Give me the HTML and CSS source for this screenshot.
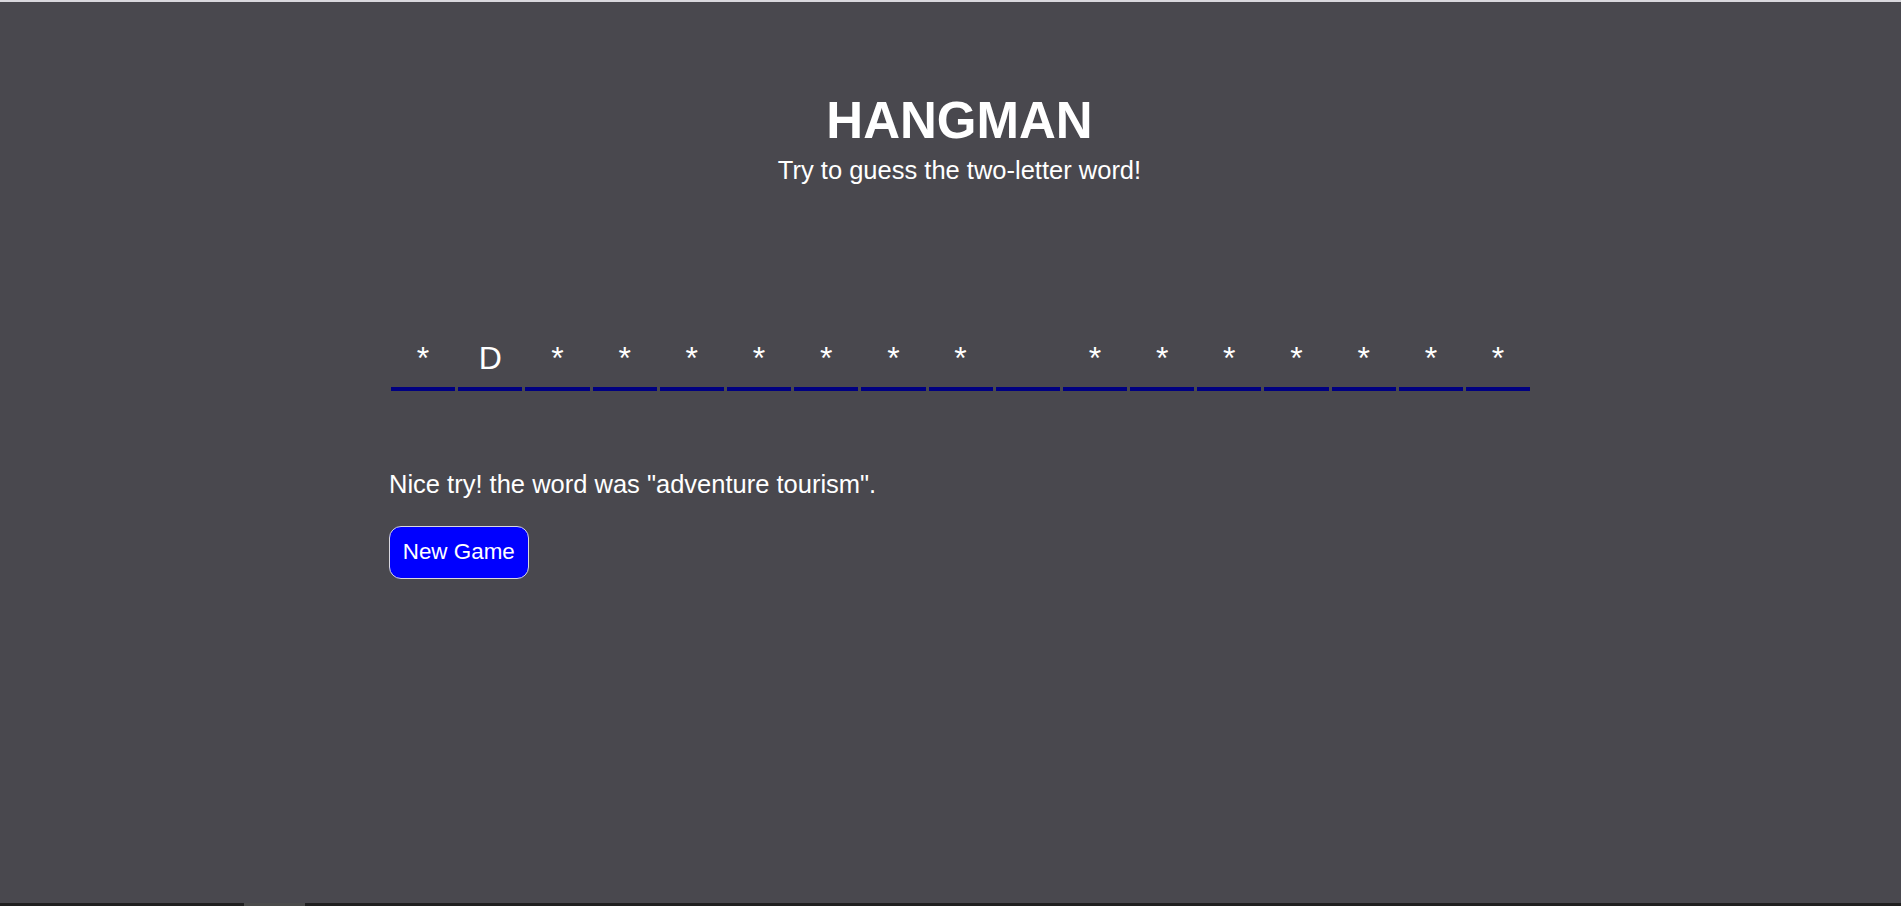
FILE: index.html
```html
<!DOCTYPE html>
<html lang="en">
<head>
<meta charset="utf-8">
<title>Hangman</title>
<link rel="stylesheet" href="styles.css">
</head>
<body>
<div class="top-strip"></div>
<main class="game">
  <header class="game-header">
    <h1 class="title">HANGMAN</h1>
    <p class="subtitle">Try to guess the two-letter word!</p>
  </header>
  <div class="word">
    <span class="slot">*</span>
    <span class="slot">D</span>
    <span class="slot">*</span>
    <span class="slot">*</span>
    <span class="slot">*</span>
    <span class="slot">*</span>
    <span class="slot">*</span>
    <span class="slot">*</span>
    <span class="slot">*</span>
    <span class="slot">&nbsp;</span>
    <span class="slot">*</span>
    <span class="slot">*</span>
    <span class="slot">*</span>
    <span class="slot">*</span>
    <span class="slot">*</span>
    <span class="slot">*</span>
    <span class="slot">*</span>
  </div>
  <p class="message">Nice try! the word was "adventure tourism".</p>
  <button class="new-game" type="button">New Game</button>
</main>
<div class="scrollbar"><div class="scrollbar-thumb"></div></div>
</body>
</html>
```
FILE: styles.css
```css
html, body {
  margin: 0;
  padding: 0;
}

body {
  min-height: 100vh;
  display: flex;
  flex-direction: column;
  background: #49484e;
  color: #ffffff;
  font-family: "Liberation Sans", Arial, sans-serif;
  overflow: hidden;
}

.top-strip {
  height: 2px;
  background: #d9d8dd;
  flex: none;
}

.game {
  flex: 1;
  width: 1141px;
  margin-left: 389px;
  padding-top: 90px;
}

.game-header {
  text-align: center;
}

.title {
  margin: 0;
  font-size: 51px;
  line-height: 58px;
  font-weight: bold;
}

.subtitle {
  margin: 4.5px 0 0;
  font-size: 25.5px;
  line-height: 30px;
}

.word {
  display: flex;
  gap: 3px;
  margin-top: 154.7px;
  margin-left: 2px;
}

.slot {
  width: 64.2px;
  flex: none;
  text-align: center;
  font-size: 32px;
  line-height: 38px;
  padding-bottom: 9.8px;
  border-bottom: 4px solid #000080;
}

.message {
  margin: 78.2px 0 0;
  font-size: 25.5px;
  line-height: 30px;
}

.new-game {
  display: block;
  margin-top: 26.8px;
  padding: 12.5px 12.75px;
  font-family: "Liberation Sans", Arial, sans-serif;
  font-size: 22.4px;
  line-height: 26px;
  color: #ffffff;
  background: #0000ff;
  border: 1px solid #d8d8e0;
  border-radius: 12px;
  cursor: pointer;
}

.scrollbar {
  flex: none;
  height: 3px;
  background: #1f1f1f;
}

.scrollbar-thumb {
  width: 61px;
  height: 3px;
  margin-left: 244px;
  background: #4b4b4b;
}
```
